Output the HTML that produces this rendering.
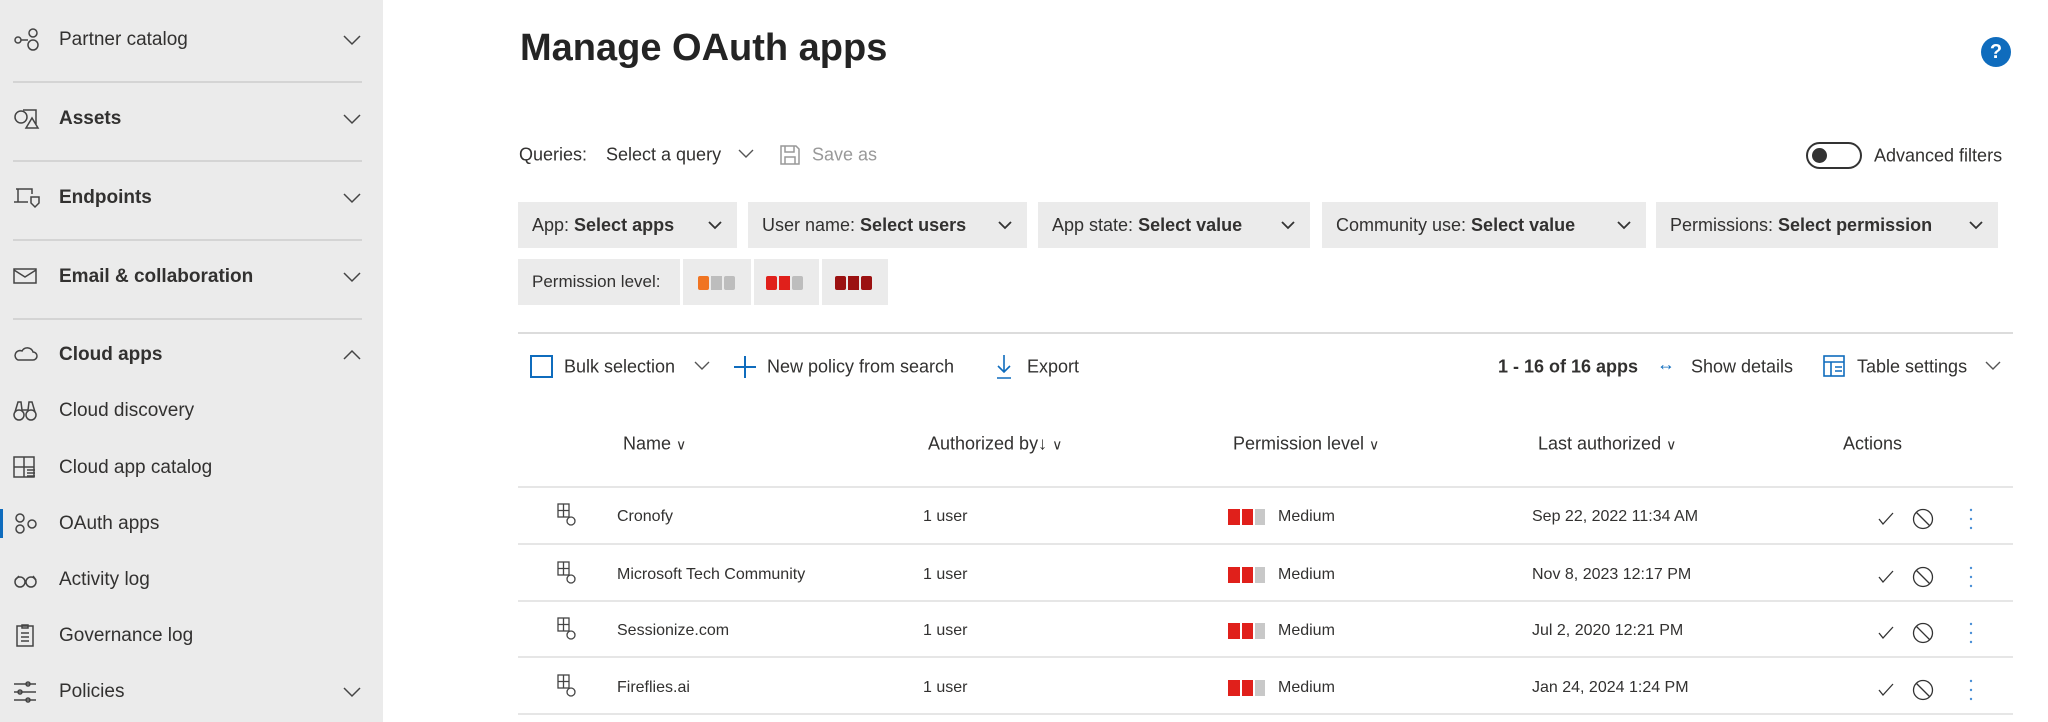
<!DOCTYPE html>
<html><head><meta charset="utf-8"><style>
*{box-sizing:border-box;margin:0;padding:0}
body{width:2048px;height:722px;overflow:hidden;background:#fff;font-family:"Liberation Sans",sans-serif;color:#323130;position:relative}
.a{position:absolute;white-space:nowrap}
#side{position:absolute;left:0;top:0;width:383px;height:722px;background:#ebebeb}
.si{position:absolute;left:59px;font-size:19px;transform:translateY(-50%)}
.b{font-weight:bold}
.ic{position:absolute;left:13px;transform:translateY(-50%)}
.sep{position:absolute;left:13px;width:349px;height:2px;background:#d4d4d4}
.chev{position:absolute;left:342px;transform:translateY(-50%)}
.chip{position:absolute;top:202px;height:46px;background:#ebebeb;font-size:18px;line-height:46px;padding-left:14px}
.rl{position:absolute;left:518px;width:1495px;height:2px;background:#e6e6e6}
.t{font-size:16px;transform:translateY(-50%);color:#323130}
.h{font-size:18px;transform:translateY(-50%);color:#323130}
</style></head><body>
<div id="side">
<svg class="ic" style="top:40px" width="34" height="26" viewBox="0 0 34 26" fill="none" stroke="#444" stroke-width="1.5"><circle cx="5" cy="13" r="3"/><circle cx="20" cy="6" r="4"/><circle cx="20" cy="18" r="5"/><path d="M8 13h7"/></svg>
<div class="si" style="top:40px">Partner catalog</div>
<div class="sep" style="top:81px"></div>
<svg class="ic" style="top:119px" width="34" height="26" viewBox="0 0 34 26" fill="none" stroke="#444" stroke-width="1.5"><circle cx="8" cy="11" r="6"/><path d="M10 4h13v14"/><path d="M13 22l6-10 6 10z"/></svg>
<div class="si b" style="top:119px">Assets</div>
<div class="sep" style="top:160px"></div>
<svg class="ic" style="top:198px" width="34" height="26" viewBox="0 0 34 26" fill="none" stroke="#444" stroke-width="1.5"><path d="M3 4h16v5M5 4v13M1 17h14"/><path d="M18 12h8v6l-4 4-4-4z"/></svg>
<div class="si b" style="top:198px">Endpoints</div>
<div class="sep" style="top:239px"></div>
<svg class="ic" style="top:277px" width="34" height="26" viewBox="0 0 34 26" fill="none" stroke="#444" stroke-width="1.5"><rect x="1" y="5" width="22" height="14"/><path d="M1 6l11 7 11-7"/></svg>
<div class="si b" style="top:277px">Email &amp; collaboration</div>
<div class="sep" style="top:318px"></div>
<svg class="ic" style="top:355px" width="34" height="26" viewBox="0 0 34 26" fill="none" stroke="#444" stroke-width="1.5"><path d="M5 18h15a4 4 0 0 0 0-8 6 6 0 0 0-11-1 4.5 4.5 0 0 0-4 9z"/></svg>
<div class="si b" style="top:355px">Cloud apps</div>
<svg class="ic" style="top:411px" width="34" height="26" viewBox="0 0 34 26" fill="none" stroke="#444" stroke-width="1.5"><circle cx="6" cy="17" r="5"/><circle cx="18" cy="17" r="5"/><path d="M2 14l3-10h3l1 8M22 14l-3-10h-3l-1 8M9 12h6"/></svg>
<div class="si" style="top:411px">Cloud discovery</div>
<svg class="ic" style="top:468px" width="34" height="26" viewBox="0 0 34 26" fill="none" stroke="#444" stroke-width="1.5"><rect x="1" y="2" width="20" height="20"/><path d="M1 12h20M11 2v20M14 15h8M14 18h8M14 21h8"/></svg>
<div class="si" style="top:468px">Cloud app catalog</div>
<div class="a" style="left:0;top:509px;width:3px;height:29px;background:#0f6cbd"></div>
<svg class="ic" style="top:524px" width="34" height="26" viewBox="0 0 34 26" fill="none" stroke="#444" stroke-width="1.5"><circle cx="7" cy="7" r="4"/><circle cx="7" cy="18" r="4"/><circle cx="19" cy="13" r="4"/></svg>
<div class="si" style="top:524px">OAuth apps</div>
<svg class="ic" style="top:580px" width="34" height="26" viewBox="0 0 34 26" fill="none" stroke="#444" stroke-width="1.5"><circle cx="7" cy="15" r="5"/><circle cx="18" cy="15" r="5"/><path d="M2 13l4-4M23 13l-3-4"/></svg>
<div class="si" style="top:580px">Activity log</div>
<svg class="ic" style="top:636px" width="34" height="26" viewBox="0 0 34 26" fill="none" stroke="#444" stroke-width="1.5"><rect x="4" y="3" width="16" height="20"/><path d="M9 2h6v3H9zM8 10h8M8 14h8M8 18h8"/></svg>
<div class="si" style="top:636px">Governance log</div>
<svg class="ic" style="top:692px" width="34" height="26" viewBox="0 0 34 26" fill="none" stroke="#444" stroke-width="1.5"><path d="M1 5h22M1 13h22M1 21h22"/><circle cx="15" cy="5" r="2"/><circle cx="7" cy="13" r="2"/><circle cx="15" cy="21" r="2"/></svg>
<div class="si" style="top:692px">Policies</div>
<svg class="chev" style="top:40px" width="20" height="12" viewBox="0 0 20 12" fill="none" stroke="#444" stroke-width="1.5"><path d="M2 2l8 8 8-8"/></svg>
<svg class="chev" style="top:119px" width="20" height="12" viewBox="0 0 20 12" fill="none" stroke="#444" stroke-width="1.5"><path d="M2 2l8 8 8-8"/></svg>
<svg class="chev" style="top:198px" width="20" height="12" viewBox="0 0 20 12" fill="none" stroke="#444" stroke-width="1.5"><path d="M2 2l8 8 8-8"/></svg>
<svg class="chev" style="top:277px" width="20" height="12" viewBox="0 0 20 12" fill="none" stroke="#444" stroke-width="1.5"><path d="M2 2l8 8 8-8"/></svg>
<svg class="chev" style="top:355px" width="20" height="12" viewBox="0 0 20 12" fill="none" stroke="#444" stroke-width="1.5"><path d="M2 10l8-8 8 8"/></svg>
<svg class="chev" style="top:692px" width="20" height="12" viewBox="0 0 20 12" fill="none" stroke="#444" stroke-width="1.5"><path d="M2 2l8 8 8-8"/></svg>
</div>

<div class="a b" style="left:520px;top:27px;font-size:38px;color:#242424">Manage OAuth apps</div>
<div class="a" style="left:1981px;top:37px;width:30px;height:30px;border-radius:50%;background:#0f6cbd;color:#fff;font-weight:bold;font-size:20px;line-height:30px;text-align:center">?</div>

<div class="a h" style="left:519px;top:155px">Queries:</div>
<div class="a h" style="left:606px;top:155px">Select a query</div>
<svg class="a" style="left:738px;top:149px" width="16" height="10" viewBox="0 0 16 10" fill="none" stroke="#555" stroke-width="1.4"><path d="M1 1l7 7 7-7"/></svg>
<svg class="a" style="left:779px;top:144px" width="22" height="22" viewBox="0 0 22 22" fill="none" stroke="#999" stroke-width="1.5"><path d="M2 2h15l3 3v15H2z M6 2v6h9V2 M6 20v-7h10v7"/></svg>
<div class="a h" style="left:812px;top:155px;color:#999">Save as</div>
<div class="a" style="left:1806px;top:142px;width:56px;height:27px;border:2px solid #333;border-radius:14px"></div>
<div class="a" style="left:1812px;top:148px;width:15px;height:15px;border-radius:50%;background:#333"></div>
<div class="a h" style="left:1874px;top:156px">Advanced filters</div>

<div class="chip" style="left:518px;width:219px">App: <b>Select apps</b></div>
<div class="chip" style="left:748px;width:279px">User name: <b>Select users</b></div>
<div class="chip" style="left:1038px;width:272px">App state: <b>Select value</b></div>
<div class="chip" style="left:1322px;width:324px">Community use: <b>Select value</b></div>
<div class="chip" style="left:1656px;width:342px">Permissions: <b>Select permission</b></div>
<svg class="a" style="left:708px;top:221px" width="14" height="9" viewBox="0 0 14 9" fill="none" stroke="#333" stroke-width="1.8"><path d="M1 1l6 6 6-6"/></svg>
<svg class="a" style="left:998px;top:221px" width="14" height="9" viewBox="0 0 14 9" fill="none" stroke="#333" stroke-width="1.8"><path d="M1 1l6 6 6-6"/></svg>
<svg class="a" style="left:1281px;top:221px" width="14" height="9" viewBox="0 0 14 9" fill="none" stroke="#333" stroke-width="1.8"><path d="M1 1l6 6 6-6"/></svg>
<svg class="a" style="left:1617px;top:221px" width="14" height="9" viewBox="0 0 14 9" fill="none" stroke="#333" stroke-width="1.8"><path d="M1 1l6 6 6-6"/></svg>
<svg class="a" style="left:1969px;top:221px" width="14" height="9" viewBox="0 0 14 9" fill="none" stroke="#333" stroke-width="1.8"><path d="M1 1l6 6 6-6"/></svg>

<div class="chip" style="left:518px;top:259px;width:162px;font-size:17px">Permission level:</div>
<div class="chip" style="left:683px;top:259px;width:68px"></div>
<div class="chip" style="left:754px;top:259px;width:65px"></div>
<div class="chip" style="left:822px;top:259px;width:66px"></div>
<svg class="a" style="left:698px;top:276px" width="40" height="14"><rect x="0" width="11" height="14" rx="2" fill="#f07422"/><rect x="13" width="11" height="14" fill="#bdbdbd"/><rect x="26" width="11" height="14" rx="2" fill="#bdbdbd"/></svg>
<svg class="a" style="left:766px;top:276px" width="40" height="14"><rect x="0" width="11" height="14" rx="2" fill="#e0201b"/><rect x="13" width="11" height="14" fill="#e0201b"/><rect x="26" width="11" height="14" rx="2" fill="#bdbdbd"/></svg>
<svg class="a" style="left:835px;top:276px" width="40" height="14"><rect x="0" width="11" height="14" rx="2" fill="#9b1111"/><rect x="13" width="11" height="14" fill="#9b1111"/><rect x="26" width="11" height="14" rx="2" fill="#9b1111"/></svg>

<div class="a" style="left:518px;top:332px;width:1495px;height:2px;background:#dcdcdc"></div>

<div class="a" style="left:530px;top:355px;width:23px;height:23px;border:2px solid #0f6cbd"></div>
<div class="a h" style="left:564px;top:367px">Bulk selection</div>
<svg class="a" style="left:694px;top:361px" width="16" height="10" viewBox="0 0 16 10" fill="none" stroke="#555" stroke-width="1.4"><path d="M1 1l7 7 7-7"/></svg>
<svg class="a" style="left:733px;top:355px" width="24" height="24" viewBox="0 0 24 24" stroke="#0f6cbd" stroke-width="2"><path d="M12 1v22M1 12h22"/></svg>
<div class="a h" style="left:767px;top:367px">New policy from search</div>
<svg class="a" style="left:995px;top:354px" width="18" height="26" viewBox="0 0 18 26" fill="none" stroke="#0f6cbd" stroke-width="1.6"><path d="M9 1v17M3 12l6 6 6-6M2 24h14"/></svg>
<div class="a h" style="left:1027px;top:367px">Export</div>
<div class="a h b" style="left:1498px;top:367px">1 - 16 of 16 apps</div>
<div class="a" style="left:1657px;top:354px;font-size:18px;color:#0f6cbd">↔</div>
<div class="a h" style="left:1691px;top:367px">Show details</div>
<svg class="a" style="left:1823px;top:355px" width="22" height="22" viewBox="0 0 22 22" fill="none" stroke="#0f6cbd" stroke-width="1.6"><rect x="1" y="1" width="20" height="20"/><path d="M1 7h20M8 7v14M12 12h7M12 16h7"/></svg>
<div class="a h" style="left:1857px;top:367px">Table settings</div>
<svg class="a" style="left:1985px;top:361px" width="16" height="10" viewBox="0 0 16 10" fill="none" stroke="#555" stroke-width="1.4"><path d="M1 1l7 7 7-7"/></svg>

<div class="a h" style="left:623px;top:444px">Name <span style="font-size:14px">∨</span></div>
<div class="a h" style="left:928px;top:444px">Authorized by↓ <span style="font-size:14px">∨</span></div>
<div class="a h" style="left:1233px;top:444px">Permission level <span style="font-size:14px">∨</span></div>
<div class="a h" style="left:1538px;top:444px">Last authorized <span style="font-size:14px">∨</span></div>
<div class="a h" style="left:1843px;top:444px">Actions</div>

<div class="rl" style="top:486px"></div>
<div class="rl" style="top:543px"></div>
<div class="rl" style="top:600px"></div>
<div class="rl" style="top:656px"></div>
<div class="rl" style="top:713px"></div>

<div id="rows"></div>
<script>
var d=[["Cronofy","Sep 22, 2022 11:34 AM",517],["Microsoft Tech Community","Nov 8, 2023 12:17 PM",575],["Sessionize.com","Jul 2, 2020 12:21 PM",631],["Fireflies.ai","Jan 24, 2024 1:24 PM",688]];
var h="";
d.forEach(function(r){var y=r[2];
h+='<svg class="a" style="left:557px;top:'+(y-14)+'px" width="22" height="26" viewBox="0 0 22 26" fill="none" stroke="#444" stroke-width="1.3"><rect x="1" y="1" width="11" height="13"/><path d="M1 7.5h11M6.5 1v13"/><circle cx="14" cy="18" r="4"/></svg>';
h+='<div class="a t" style="left:617px;top:'+y+'px">'+r[0]+'</div>';
h+='<div class="a t" style="left:923px;top:'+y+'px">1 user</div>';
h+='<svg class="a" style="left:1228px;top:'+(y-8)+'px" width="40" height="16"><rect x="0" width="12" height="16" fill="#e0201b"/><rect x="14" width="11" height="16" fill="#e0201b"/><rect x="27" width="10" height="16" fill="#c8c8c8"/></svg>';
h+='<div class="a t" style="left:1278px;top:'+y+'px">Medium</div>';
h+='<div class="a t" style="left:1532px;top:'+y+'px">'+r[1]+'</div>';
h+='<svg class="a" style="left:1878px;top:'+(y-5)+'px" width="16" height="14" viewBox="0 0 16 14" fill="none" stroke="#333" stroke-width="1.3"><path d="M1 7l4 5L15 1"/></svg>';
h+='<svg class="a" style="left:1912px;top:'+(y-9)+'px" width="22" height="22" viewBox="0 0 22 22" fill="none" stroke="#333" stroke-width="1.3"><circle cx="11" cy="11" r="9.5"/><path d="M4.5 4.5l13 13"/></svg>';
h+='<svg class="a" style="left:1969px;top:'+(y-10)+'px" width="4" height="24"><circle cx="2" cy="3" r="1.2" fill="#4a8fd6"/><circle cx="2" cy="12" r="1.2" fill="#4a8fd6"/><circle cx="2" cy="21" r="1.2" fill="#4a8fd6"/></svg>';
});
document.getElementById("rows").innerHTML=h;
</script>
</body></html>
